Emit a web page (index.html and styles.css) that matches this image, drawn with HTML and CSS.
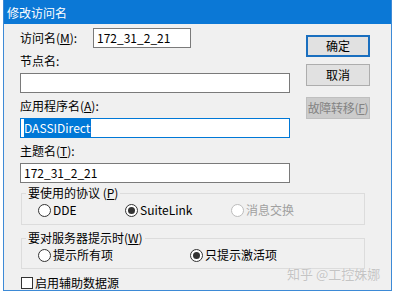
FILE: index.html
```html
<!DOCTYPE html>
<html lang="zh-CN">
<head>
  <meta charset="UTF-8">
  <title>修改访问名</title>
  <link rel="stylesheet" href="styles.css">
</head>
<body>

<div class="dialog">
  <div class="titlebar">修改访问名</div>
  <div class="dialog-body">
    <div class="top">
      <div class="fields">
        <div class="row-access">
          <span class="label-inline">访问名(<u>M</u>):</span>
          <div class="textbox short">172_31_2_21</div>
        </div>
        <div class="label">节点名:</div>
        <div class="textbox"></div>
        <div class="label">应用程序名(<u>A</u>):</div>
        <div class="textbox focused"><span class="selected">DASSIDirect</span></div>
        <div class="label">主题名(<u>T</u>):</div>
        <div class="textbox">172_31_2_21</div>
      </div>
      <div class="buttons">
        <button class="btn btn-default">确定</button>
        <button class="btn">取消</button>
        <button class="btn btn-failover" disabled>故障转移(<u>F</u>)</button>
      </div>
    </div>

    <fieldset class="group">
      <legend>要使用的协议 (<u>P</u>)</legend>
      <div class="options protocol">
        <div class="radio"><span class="radio-mark"></span>DDE</div>
        <div class="radio checked"><span class="radio-mark"></span>SuiteLink</div>
        <div class="radio disabled"><span class="radio-mark"></span>消息交换</div>
      </div>
    </fieldset>

    <fieldset class="group group-notify">
      <legend>要对服务器提示时(<u>W</u>)</legend>
      <div class="options notify">
        <div class="radio"><span class="radio-mark"></span>提示所有项</div>
        <div class="radio checked"><span class="radio-mark"></span>只提示激活项</div>
      </div>
    </fieldset>

    <div class="check-row">
      <span class="check-mark"></span>启用辅助数据源
    </div>
  </div>

  <!-- 截图上的水印 -->
  <div class="watermark">知乎 @工控姝娜</div>
</div>

</body>
</html>
```

FILE: styles.css
```css
body {
  margin: 0;
  background: #fff;
  font-family: "Noto Sans CJK SC", "Liberation Sans", sans-serif;
  font-size: 12px;
  color: #000;
}

u {
  text-decoration: underline;
  text-underline-offset: 1px;
}

.dialog {
  position: relative;
  width: 389px;
  height: 291px;
  margin-left: 3px;
  box-sizing: border-box;
  border: 1px solid #3d8ad6;
  border-top: 0;
  background: #f0f0f0;
  overflow: hidden;
}

.titlebar {
  height: 23px;
  padding: 1px 0 0 3px;
  line-height: 23px;
  background: #0b78d6;
  color: #fff;
}

.dialog-body {
  padding: 4px 0 0 16px;
}

.top {
  display: flex;
}

.fields {
  width: 270px;
  display: flex;
  flex-direction: column;
}

.row-access {
  display: flex;
  align-items: center;
  height: 20px;
  line-height: 16px;
}

.label-inline {
  width: 73px;
}

.label {
  line-height: 16px;
  margin: 5px 0 4px;
}

.textbox {
  height: 20px;
  box-sizing: border-box;
  border: 1px solid #7a7a7a;
  background: #fff;
  padding-left: 3px;
  line-height: 18px;
  white-space: nowrap;
}

.textbox.short {
  width: 98px;
}

.textbox.focused {
  border-color: #0078d7;
}

.selected {
  background: #0078d7;
  color: #fff;
  padding: 1px 1px 1px 0;
}

.buttons {
  margin-left: 16px;
  padding-top: 7px;
  display: flex;
  flex-direction: column;
  gap: 7px;
}

.btn {
  width: 64px;
  height: 22px;
  padding: 0;
  box-sizing: border-box;
  border: 1px solid #adadad;
  background: #e1e1e1;
  font-family: inherit;
  font-size: 12px;
  line-height: 16px;
  color: #000;
  white-space: nowrap;
}

.btn-default {
  border: 2px solid #1a6fbf;
}

.btn-failover {
  margin-top: 4px;
  background: #cccccc;
  border-color: #bfbfbf;
  color: #838383;
  letter-spacing: -0.3px;
}

.group {
  margin: 2px 0 0 1px;
  padding: 0 0 5px;
  width: 344px;
  box-sizing: border-box;
  min-width: 0;
  border: 1px solid #dcdcdc;
}

.group legend {
  padding: 0 2px;
  margin-left: 4px;
  line-height: 16px;
}

.group-notify {
  margin-top: 5px;
  padding-bottom: 4px;
}

.options {
  display: grid;
  align-items: center;
  height: 18px;
  padding-left: 16px;
  line-height: 16px;
}

.options.protocol {
  grid-template-columns: 87px 106px auto;
}

.options.notify {
  grid-template-columns: 152px auto;
}

.radio {
  display: flex;
  align-items: center;
  gap: 2px;
  white-space: nowrap;
}

.radio-mark {
  position: relative;
  width: 13px;
  height: 13px;
  box-sizing: border-box;
  border: 1px solid #333;
  border-radius: 50%;
  background: #fff;
}

.radio.checked .radio-mark::after {
  content: "";
  position: absolute;
  left: 2px;
  top: 2px;
  width: 7px;
  height: 7px;
  border-radius: 50%;
  background: #333;
}

.radio.disabled {
  color: #a0a0a0;
}

.radio.disabled .radio-mark {
  border-color: #bcbcbc;
}

.check-row {
  display: flex;
  align-items: center;
  gap: 2px;
  margin: 7px 0 0 1px;
  line-height: 14px;
}

.check-mark {
  width: 12px;
  height: 12px;
  box-sizing: border-box;
  border: 1px solid #333;
  background: #fff;
}

.watermark {
  position: absolute;
  left: 283px;
  top: 266px;
  font-size: 13px;
  line-height: 16px;
  color: #c4c4c4;
  text-shadow: 0 0 1px #fff;
  white-space: nowrap;
}
```
